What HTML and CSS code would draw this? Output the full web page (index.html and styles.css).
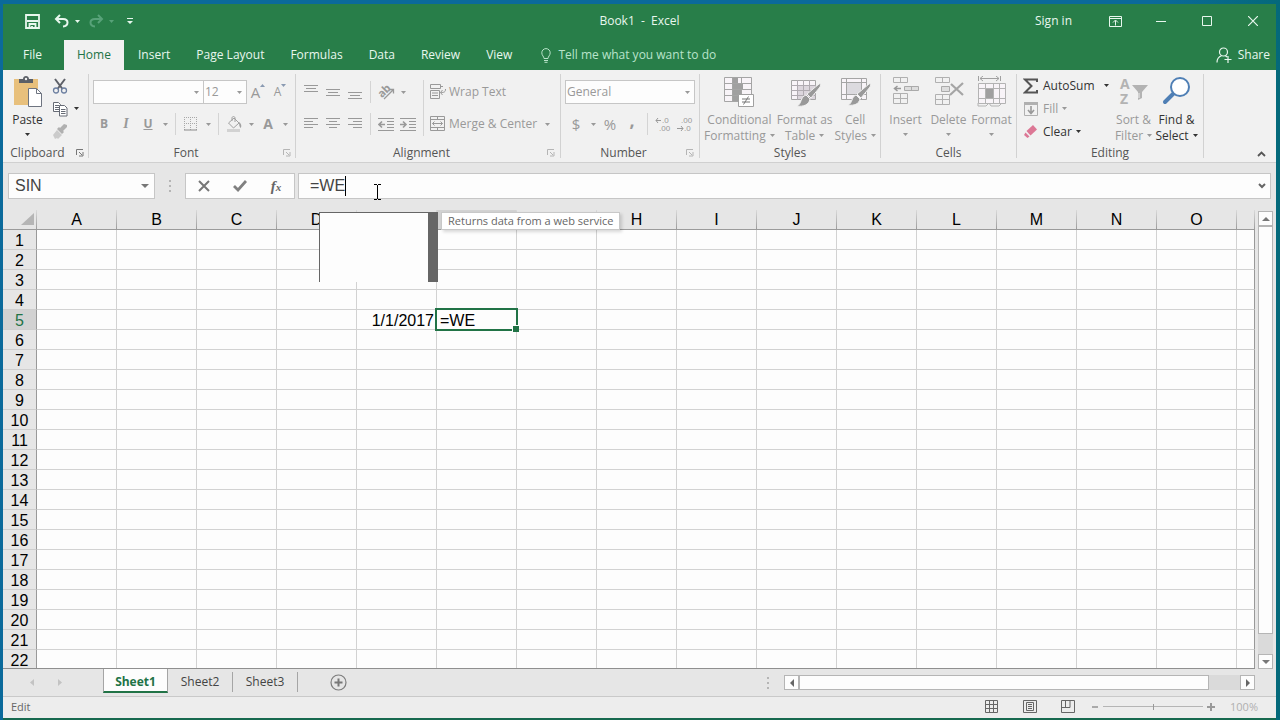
FILE: index.html
```html
<!DOCTYPE html>
<html lang="en">
<head>
  <meta charset="UTF-8">
  <meta name="viewport" content="width=device-width, initial-scale=1.0">
  <title>Book1 - Excel</title>
  <link rel="stylesheet" href="styles.css">
</head>
<body>
  <div class="window">
    <header class="titlebar">
      <div class="quick">
        <button class="quick-btn save" aria-label="Save"><svg width="15" height="15" viewBox="0 0 15 15"><path d="M1 1h13v13H1zM2 7h11M4.500 14v-4h6v4M7 14v-2" fill="none" stroke="currentColor" stroke-width="1.800"/></svg></button>
        <button class="quick-btn" aria-label="Undo"><svg width="16" height="14" viewBox="0 0 16 14"><path d="M6 1L2 5l4 4M2 5h7c6 0 6 7 0 7.500" fill="none" stroke="currentColor" stroke-width="2"/></svg></button>
        <button class="quick-drop" aria-label="Undo list"><svg class="caret" viewBox="0 0 5 3"><path d="M0 0h5L2.500 3z"/></svg></button>
        <button class="quick-btn off" aria-label="Redo"><svg width="16" height="14" viewBox="0 0 16 14"><path d="M10 1l4 4-4 4M14 5H7C1 5 1 12 7 12.500" fill="none" stroke="currentColor" stroke-width="2"/></svg></button>
        <button class="quick-drop off" aria-label="Redo list"><svg class="caret" viewBox="0 0 5 3"><path d="M0 0h5L2.500 3z"/></svg></button>
        <button class="quick-btn" aria-label="Customize toolbar"><svg width="6" height="7" viewBox="0 0 6 7"><path d="M0 0h6v1H0zM0 3h6L3 6z" fill="currentColor"/></svg></button>
      </div>
      <h1 class="doc-name">Book1 &nbsp;-&nbsp; Excel</h1>
      <div class="window-tools">
        <button class="sign-in">Sign in</button>
        <button class="win-btn" aria-label="Ribbon display options"><svg width="13" height="11" viewBox="0 0 13 11"><path d="M.5.5h12v10H.5zM.5 2.500h12M6.500 9.500V4.500M4 6.500l2.500-2.500L9 6.500" fill="none" stroke="currentColor"/></svg></button>
        <button class="win-btn" aria-label="Minimize"><svg width="10" height="10" viewBox="0 0 10 10"><path d="M0 5.500h10" stroke="currentColor"/></svg></button>
        <button class="win-btn" aria-label="Maximize"><svg width="10" height="10" viewBox="0 0 10 10"><path d="M.5.5h9v9h-9z" fill="none" stroke="currentColor"/></svg></button>
        <button class="win-btn" aria-label="Close"><svg width="10" height="10" viewBox="0 0 10 10"><path d="M0 0l10 10M10 0L0 10" stroke="currentColor" stroke-width="1.200"/></svg></button>
      </div>
    </header>

    <nav class="tabs">
      <a class="tab file" href="#">File</a>
      <a class="tab active" href="#">Home</a>
      <a class="tab" href="#">Insert</a>
      <a class="tab" href="#">Page Layout</a>
      <a class="tab" href="#">Formulas</a>
      <a class="tab" href="#">Data</a>
      <a class="tab" href="#">Review</a>
      <a class="tab" href="#">View</a>
      <a class="tell-me" href="#"><svg width="10" height="15" viewBox="0 0 10 15"><path d="M3 10.500C3 8.500.8 7.500.8 4.800a4.200 4.200 0 0 1 8.400 0C9.200 7.500 7 8.500 7 10.500zM3 12.500h4M3.500 14.300h3" fill="none" stroke="currentColor"/></svg>Tell me what you want to do</a>
      <a class="share" href="#"><svg width="16" height="16" viewBox="0 0 16 16"><circle cx="7.500" cy="5" r="4" fill="none" stroke="currentColor" stroke-width="1.200"/><path d="M1 15.500c0-4 2-6 4.500-6.800M9.500 8.700l1.500 1.300M12 9v7M8.500 12.500h7" fill="none" stroke="currentColor" stroke-width="1.200"/></svg>Share</a>
    </nav>

    <section class="ribbon">
      <div class="group clipboard">
        <div class="group-body">
          <button class="big on">
            <svg width="28" height="32" viewBox="0 0 28 32"><path d="M0 3h24v26H0z" fill="#e8c07c"/><path d="M5 7V3h4c0-4 6-4 6 0h4v4z" fill="#5b5f66"/><circle cx="12" cy="3" r="1.200" fill="#f1f1f1"/><path d="M14.500 12.500h8l5 5v13h-13z" fill="#fff" stroke="#6e7480"/><path d="M22.500 12.500v5h5" fill="none" stroke="#6e7480"/></svg>
            <span>Paste</span>
            <svg class="caret" viewBox="0 0 5 3"><path d="M0 0h5L2.500 3z"/></svg>
          </button>
          <div class="stack">
            <button class="line-btn on" aria-label="Cut"><svg width="16" height="16" viewBox="0 0 16 16"><path d="M3 1l7.500 10M13 1L5.500 11" stroke="#5d6068" stroke-width="2"/><circle cx="4" cy="12.500" r="2.500" fill="none" stroke="#6c7fa0" stroke-width="1.300"/><circle cx="12" cy="12.500" r="2.500" fill="none" stroke="#6c7fa0" stroke-width="1.300"/></svg></button>
            <button class="line-btn on" aria-label="Copy"><svg width="16" height="16" viewBox="0 0 16 16"><path d="M1.500 1.500h5l2 2v7h-7zM3 4.500h4M3 6.500h4M3 8.500h4" fill="#fff" stroke="#666b75"/><path d="M7.500 4.500h5l2.500 2.500v8H7.500zM9 8.500h4.500M9 10.500h4.500M9 12.500h4.500" fill="#fff" stroke="#666b75"/></svg><svg class="caret" viewBox="0 0 5 3"><path d="M0 0h5L2.500 3z"/></svg></button>
            <button class="line-btn" aria-label="Format painter"><svg width="16" height="16" viewBox="0 0 16 16"><path d="M15 1l-3-1-4 4-1-1-2 2 5 5 2-2-1-1 4-4z" fill="#b0b0b0"/><path d="M5 6l5 5-4 4-1-1-2 1-2-4z" fill="#cbcbcb"/></svg></button>
          </div>
        </div>
        <div class="group-foot"><span>Clipboard</span><button class="launcher on" aria-label="Clipboard settings"><svg width="8" height="8" viewBox="0 0 8 8"><path d="M.5 6V.5H7M3 3l3 3M7 3v4H3" fill="none" stroke="currentColor"/></svg></button></div>
      </div>

      <div class="group font">
        <div class="group-body rows">
          <div class="row">
            <div class="combo family"><select aria-label="Font"><option></option></select><svg class="caret" viewBox="0 0 5 3"><path d="M0 0h5L2.500 3z"/></svg></div>
            <div class="combo size"><select aria-label="Font size"><option>12</option></select><svg class="caret" viewBox="0 0 5 3"><path d="M0 0h5L2.500 3z"/></svg></div>
            <button class="tool grow" aria-label="Increase font size"><span class="glyph">A</span><svg width="5" height="3" viewBox="0 0 5 3"><path d="M0 3h5L2.500 0z" fill="#8a9ab2"/></svg></button>
            <button class="tool grow small" aria-label="Decrease font size"><span class="glyph">A</span><svg width="5" height="3" viewBox="0 0 5 3"><path d="M0 0h5L2.500 3z" fill="#8a9ab2"/></svg></button>
          </div>
          <div class="row">
            <button class="tool"><b>B</b></button>
            <button class="tool italic"><i>I</i></button>
            <button class="tool"><b><u>U</u></b></button>
            <button class="drop" aria-label="Underline styles"><svg class="caret" viewBox="0 0 5 3"><path d="M0 0h5L2.500 3z"/></svg></button>
            <span class="sep"></span>
            <button class="tool" aria-label="Borders"><svg width="14" height="14" viewBox="0 0 14 14"><path d="M.5 0v13M6.500 0v13M12.500 0v13M0 .5h13M0 6.500h13" fill="none" stroke="#a8a8a8" stroke-dasharray="1 1"/><path d="M0 13h13" stroke="#8b8b8b"/></svg></button>
            <button class="drop" aria-label="Border styles"><svg class="caret" viewBox="0 0 5 3"><path d="M0 0h5L2.500 3z"/></svg></button>
            <span class="sep"></span>
            <button class="tool" aria-label="Fill color"><svg width="16" height="16" viewBox="0 0 16 16"><path d="M2.500 7L8 2l5 5-5.500 5zM6 5V2c0-2 3-2 3 0v4" fill="none" stroke="#a0a0a0"/><path d="M13 6c3 2 2.500 5 1.500 6-1-1-1.500-3-1.500-6z" fill="#a0a0a0"/><path d="M1 13h13v3H1z" fill="#d2d2d2"/></svg></button>
            <button class="drop" aria-label="Fill colors"><svg class="caret" viewBox="0 0 5 3"><path d="M0 0h5L2.500 3z"/></svg></button>
            <button class="tool letter" aria-label="Font color"><b>A</b></button>
            <button class="drop" aria-label="Font colors"><svg class="caret" viewBox="0 0 5 3"><path d="M0 0h5L2.500 3z"/></svg></button>
          </div>
        </div>
        <div class="group-foot"><span>Font</span><button class="launcher" aria-label="Font settings"><svg width="8" height="8" viewBox="0 0 8 8"><path d="M.5 6V.5H7M3 3l3 3M7 3v4H3" fill="none" stroke="currentColor"/></svg></button></div>
      </div>

      <div class="group alignment">
        <div class="group-body">
          <div class="rows">
            <div class="row">
              <button class="tool" aria-label="Top align"><svg width="14" height="14" viewBox="0 0 14 14"><path d="M0 .5h14M2 3.500h10M0 6.500h14" stroke="currentColor"/></svg></button>
              <button class="tool" aria-label="Middle align"><svg width="14" height="14" viewBox="0 0 14 14"><path d="M0 4.500h14M2 7.500h10M0 10.500h14" stroke="currentColor"/></svg></button>
              <button class="tool" aria-label="Bottom align"><svg width="14" height="14" viewBox="0 0 14 14"><path d="M0 7.500h14M2 10.500h10M0 13.500h14" stroke="currentColor"/></svg></button>
              <span class="sep"></span>
              <button class="tool" aria-label="Orientation"><svg class="free" width="17" height="16" viewBox="0 0 17 16"><text x="0" y="11" font-size="11" font-weight="bold" fill="currentColor" transform="rotate(-45 6 8)">ab</text><path d="M6 15l9-9M11.500 5.500H15.500V9.500" fill="none" stroke="currentColor" stroke-width="1.300"/></svg></button>
              <button class="drop" aria-label="Orientation list"><svg class="caret" viewBox="0 0 5 3"><path d="M0 0h5L2.500 3z"/></svg></button>
            </div>
            <div class="row">
              <button class="tool" aria-label="Align left"><svg width="14" height="12" viewBox="0 0 14 12"><path d="M0 .5h14M0 3.500h9M0 6.500h14M0 9.500h9" stroke="currentColor"/></svg></button>
              <button class="tool" aria-label="Center"><svg width="14" height="12" viewBox="0 0 14 12"><path d="M0 .5h14M3 3.500h8M0 6.500h14M3 9.500h8" stroke="currentColor"/></svg></button>
              <button class="tool" aria-label="Align right"><svg width="14" height="12" viewBox="0 0 14 12"><path d="M0 .5h14M5 3.500h9M0 6.500h14M5 9.500h9" stroke="currentColor"/></svg></button>
              <span class="sep"></span>
              <button class="tool" aria-label="Decrease indent"><svg width="16" height="13" viewBox="0 0 16 13"><path d="M0 .5h16M9 3.500h7M9 6.500h7M9 9.500h7M0 12.500h16" stroke="currentColor"/><path d="M7 6.500H1M4 3.500l-3 3 3 3" fill="none" stroke="currentColor" stroke-width="1.600"/></svg></button>
              <button class="tool" aria-label="Increase indent"><svg width="16" height="13" viewBox="0 0 16 13"><path d="M0 .5h16M9 3.500h7M9 6.500h7M9 9.500h7M0 12.500h16" stroke="currentColor"/><path d="M0 6.500h6M3 3.500l3 3-3 3" fill="none" stroke="currentColor" stroke-width="1.600"/></svg></button>
            </div>
          </div>
          <span class="sep tall"></span>
          <div class="rows">
            <div class="row">
              <button class="text-btn"><svg width="16" height="16" viewBox="0 0 16 16"><path d="M.5.5h10v4H.5zM10 2.500h3M.5 6.500h9v8h-9zM2 9h6M2 11.500h6M15.500 5c0 3-1 3.500-5 3.500M12.500 6l-2 2.500 2 2.500" fill="none" stroke="currentColor"/></svg>Wrap Text</button>
            </div>
            <div class="row">
              <button class="text-btn"><svg width="16" height="16" viewBox="0 0 16 16"><path d="M.5.5h14v14H.5zM.5 3.500h14M.5 11.500h14M7.500.5v3M7.500 11.500v3M2.500 7.500h10M4.500 5.500l-2 2 2 2M10.500 5.500l2 2-2 2" fill="none" stroke="currentColor"/></svg>Merge &amp; Center</button>
              <button class="drop" aria-label="Merge options"><svg class="caret" viewBox="0 0 5 3"><path d="M0 0h5L2.500 3z"/></svg></button>
            </div>
          </div>
        </div>
        <div class="group-foot"><span>Alignment</span><button class="launcher" aria-label="Alignment settings"><svg width="8" height="8" viewBox="0 0 8 8"><path d="M.5 6V.5H7M3 3l3 3M7 3v4H3" fill="none" stroke="currentColor"/></svg></button></div>
      </div>

      <div class="group number">
        <div class="group-body rows">
          <div class="row">
            <div class="combo format"><select aria-label="Number format"><option>General</option></select><svg class="caret" viewBox="0 0 5 3"><path d="M0 0h5L2.500 3z"/></svg></div>
          </div>
          <div class="row">
            <button class="tool sign">$</button>
            <button class="drop" aria-label="Currencies"><svg class="caret" viewBox="0 0 5 3"><path d="M0 0h5L2.500 3z"/></svg></button>
            <button class="tool sign">%</button>
            <button class="tool comma">,</button>
            <span class="sep"></span>
            <button class="tool" aria-label="Increase decimal"><svg class="decimals" width="16" height="18" viewBox="0 0 16 18"><path d="M6 5.500H1M3 3L1 5.500 3 8" fill="none" stroke="currentColor"/><text x="7" y="8">.0</text><text x="4" y="16">.00</text></svg></button>
            <button class="tool" aria-label="Decrease decimal"><svg class="decimals" width="16" height="18" viewBox="0 0 16 18"><text x="4" y="8">.00</text><path d="M0 13.500h6M4 11l2 2.500L4 16" fill="none" stroke="currentColor"/><text x="7" y="16">.0</text></svg></button>
          </div>
        </div>
        <div class="group-foot"><span>Number</span><button class="launcher" aria-label="Number settings"><svg width="8" height="8" viewBox="0 0 8 8"><path d="M.5 6V.5H7M3 3l3 3M7 3v4H3" fill="none" stroke="currentColor"/></svg></button></div>
      </div>

      <div class="group styles">
        <div class="group-body">
          <button class="big">
            <svg width="32" height="32" viewBox="0 0 32 32"><path d="M1.500 1.500h27v24h-27z" fill="#f8f4f8" stroke="#a5a5a5"/><path d="M1 7.500h28M1 13.500h28M1 19.500h28M9.500 1v24M18.500 1v24" stroke="#a5a5a5"/><path d="M10 2h5v5h-5zM10 8h10v5H10zM10 14h8v5h-8zM10 20h5v5h-5z" fill="#a0a0a0"/><path d="M15.500 18.500h15v12h-15z" fill="#fff" stroke="#a0a0a0"/><path d="M19 23h8M19 26h8M25.500 20.500l-5 8" stroke="#777"/></svg>
            <span>Conditional<br>Formatting<svg class="caret" viewBox="0 0 5 3"><path d="M0 0h5L2.500 3z"/></svg></span>
          </button>
          <button class="big">
            <svg width="32" height="32" viewBox="0 0 32 32"><path d="M2.500 4.500h24v19h-24z" fill="#f8f4f8" stroke="#a5a5a5"/><path d="M8 9h18v14H8z" fill="#dcd6dd"/><path d="M2 9.500h25M2 14.500h25M2 19.500h25M8.500 4v20M14.500 4v20M20.500 4v20" stroke="#b0abb1"/><path d="M30 8c2-1 2 1 1 3l-9 11-4-4z" fill="#999" stroke="#f1f1f1"/><path d="M17 19l4 4c-1 6-7 8-13 7 5-2 3-9 9-11z" fill="#999" stroke="#f1f1f1"/></svg>
            <span>Format as<br>Table<svg class="caret" viewBox="0 0 5 3"><path d="M0 0h5L2.500 3z"/></svg></span>
          </button>
          <button class="big">
            <svg width="32" height="32" viewBox="0 0 32 32"><path d="M2.500 2.500h25v21h-25z" fill="#f8f4f8" stroke="#a5a5a5"/><path d="M2 6.500h26M2 18.500h26M7.500 2v22M22.500 2v22" stroke="#a5a5a5"/><path d="M8 7h14v11H8z" fill="#dcdadf"/><path d="M30 8c2-1 2 1 1 3l-9 11-4-4z" fill="#999" stroke="#f1f1f1"/><path d="M17 19l4 4c-1 5-6 7-12 6 5-2 3-8 8-10z" fill="#999" stroke="#f1f1f1"/></svg>
            <span>Cell<br>Styles<svg class="caret" viewBox="0 0 5 3"><path d="M0 0h5L2.500 3z"/></svg></span>
          </button>
        </div>
        <div class="group-foot"><span>Styles</span></div>
      </div>

      <div class="group cells">
        <div class="group-body">
          <button class="big">
            <svg width="28" height="32" viewBox="0 0 28 32"><path d="M1.500 1.500h14v5h-14zM8.500 1.500v5M1.500 17.500h14v10h-14zM8.500 17.500v10M1.500 22.500h14" fill="none" stroke="#b0b0b0"/><path d="M12.500 10.500h14v4h-14zM19.500 10.500v4" fill="#ddd" stroke="#aaa"/><path d="M9 12.500H3M5.500 10l-3 2.500 3 2.500" fill="none" stroke="#999" stroke-width="1.500"/></svg>
            <span>Insert</span>
            <svg class="caret" viewBox="0 0 5 3"><path d="M0 0h5L2.500 3z"/></svg>
          </button>
          <button class="big">
            <svg width="30" height="32" viewBox="0 0 30 32"><path d="M1.500 1.500h14v5h-14zM8.500 1.500v5M1.500 18.500h14v10h-14zM8.500 18.500v10M1.500 23.500h14" fill="none" stroke="#b0b0b0"/><path d="M7.500 10.500h8v5h-8z" fill="#ddd" stroke="#aaa"/><path d="M17 8l12 11M29 7L16 19" stroke="#a5a5a5" stroke-width="2.200"/></svg>
            <span>Delete</span>
            <svg class="caret" viewBox="0 0 5 3"><path d="M0 0h5L2.500 3z"/></svg>
          </button>
          <button class="big">
            <svg width="30" height="32" viewBox="0 0 30 32"><path d="M1.500 0v5M23.500 0v5M3 2.500h19M6 0L3 2.500 6 5M19 0l3 2.500L19 5" fill="none" stroke="#a0a0a0"/><path d="M1.500 7.500h27v20h-27zM8.500 7.500v20M16.500 7.500v20M22.500 7.500v20M1.500 12.500h27M1.500 22.500h27" fill="#f8f4f8" stroke="#b3b3b3"/><path d="M9 13h7v9H9z" fill="#a0a0a0"/><path d="M1 27v3h8l3-3 2 3h8l3-3" fill="none" stroke="#b3b3b3"/></svg>
            <span>Format</span>
            <svg class="caret" viewBox="0 0 5 3"><path d="M0 0h5L2.500 3z"/></svg>
          </button>
        </div>
        <div class="group-foot"><span>Cells</span></div>
      </div>

      <div class="group editing">
        <div class="group-body">
          <div class="stack">
            <button class="line-btn on sum"><svg width="16" height="16" viewBox="0 0 16 16"><path d="M14 4V1.500H2L8.500 8 2 14.500h12V12" fill="none" stroke="#555" stroke-width="2"/></svg>AutoSum<svg class="caret" viewBox="0 0 5 3"><path d="M0 0h5L2.500 3z"/></svg></button>
            <button class="line-btn"><svg width="16" height="16" viewBox="0 0 16 16"><path d="M1.500 1.500h13v13h-13z" fill="none" stroke="#b0b0b0"/><path d="M1 1h14v3H1z" fill="#b0b0b0"/><path d="M8 5v7M5 9l3 3.500L11 9" fill="none" stroke="#999" stroke-width="1.600"/></svg>Fill<svg class="caret" viewBox="0 0 5 3"><path d="M0 0h5L2.500 3z"/></svg></button>
            <button class="line-btn on"><svg width="16" height="16" viewBox="0 0 16 16"><path d="M10 1l4 4.500-6.500 6L3.500 7z" fill="#dc7795"/><path d="M2.500 8.500L6.500 12.500 4.500 14 1 11z" fill="#dc7795"/></svg>Clear<svg class="caret" viewBox="0 0 5 3"><path d="M0 0h5L2.500 3z"/></svg></button>
          </div>
          <button class="big">
            <svg width="30" height="32" viewBox="0 0 30 32"><text class="az" x="1" y="13">A</text><text class="az" x="1" y="28">Z</text><path d="M13 9h16l-6 7v6l-4 2v-8z" fill="#b3b3b3"/><path d="M20 17v5" stroke="#eee"/></svg>
            <span>Sort &amp;<br>Filter<svg class="caret" viewBox="0 0 5 3"><path d="M0 0h5L2.500 3z"/></svg></span>
          </button>
          <button class="big on">
            <svg width="30" height="32" viewBox="0 0 30 32"><path d="M12 17L3 26" stroke="#4f7fb5" stroke-width="4" stroke-linecap="round"/><circle cx="18" cy="11" r="9" fill="#fff" stroke="#4f7fb5" stroke-width="2"/></svg>
            <span>Find &amp;<br>Select<svg class="caret" viewBox="0 0 5 3"><path d="M0 0h5L2.500 3z"/></svg></span>
          </button>
        </div>
        <div class="group-foot"><span>Editing</span></div>
      </div>

      <button class="collapse" aria-label="Collapse the ribbon"><svg width="9" height="6" viewBox="0 0 9 6"><path d="M1 5l3.500-3.500L8 5" fill="none" stroke="currentColor" stroke-width="1.800"/></svg></button>
    </section>

    <div class="formula-bar">
      <div class="name-box">
        <input value="SIN" aria-label="Name box">
        <button aria-label="Names"><svg width="8" height="4" viewBox="0 0 8 4"><path d="M0 0h8L4 4z" fill="#777"/></svg></button>
      </div>
      <svg class="dots" width="2" height="12" viewBox="0 0 2 12"><path d="M0 0h2v2H0zM0 5h2v2H0zM0 10h2v2H0z" fill="#b5b5b5"/></svg>
      <div class="entry">
        <button aria-label="Cancel"><svg width="12" height="12" viewBox="0 0 12 12"><path d="M1 1l10 10M11 1L1 11" stroke="#777" stroke-width="2"/></svg></button>
        <button aria-label="Enter"><svg width="14" height="12" viewBox="0 0 14 12"><path d="M1 6l4 4 8-9" fill="none" stroke="#808080" stroke-width="2.800"/></svg></button>
        <button class="fx" aria-label="Insert function"><i>f<small>x</small></i></button>
      </div>
      <div class="formula">
        <input value="=WE" aria-label="Formula">
        <span class="text-cursor"></span>
        <svg class="pointer" width="9" height="16" viewBox="0 0 9 16"><path d="M1 .5h3M5 .5h3M4.500 1v14M1 15.500h3M5 15.500h3" stroke="#000"/></svg>
        <button aria-label="Expand formula bar"><svg width="8" height="6" viewBox="0 0 8 6"><path d="M1 1l3 3 3-3" fill="none" stroke="#666" stroke-width="2"/></svg></button>
      </div>
    </div>

    <main class="workspace">
      <div class="sheet">
        <table class="grid">
          <thead><tr id="columns"><th class="corner"><svg width="13" height="12" viewBox="0 0 13 12"><path d="M13 0v12H0z" fill="#b5b5b5"/></svg></th></tr></thead>
          <tbody id="cells"></tbody>
        </table>
        <div class="hint">
          <div class="hint-list"></div>
          <div class="hint-text">Returns data from a web service</div>
        </div>
      </div>
      <div class="vscroll">
        <button aria-label="Scroll up"><svg width="8" height="4" viewBox="0 0 8 4"><path d="M0 4h8L4 0z" fill="#777"/></svg></button>
        <div class="vthumb"></div>
        <button aria-label="Scroll down"><svg width="8" height="4" viewBox="0 0 8 4"><path d="M0 0h8L4 4z" fill="#777"/></svg></button>
      </div>
    </main>

    <div class="sheet-bar">
      <div class="sheet-nav">
        <button aria-label="Previous sheet"><svg width="4" height="7" viewBox="0 0 4 7"><path d="M4 0v7L0 3.500z" fill="#c3c3c3"/></svg></button>
        <button aria-label="Next sheet"><svg width="4" height="7" viewBox="0 0 4 7"><path d="M0 0v7l4-3.500z" fill="#c3c3c3"/></svg></button>
      </div>
      <a class="sheet-tab current" href="#">Sheet1</a>
      <a class="sheet-tab" href="#">Sheet2</a>
      <a class="sheet-tab" href="#">Sheet3</a>
      <button class="add-sheet" aria-label="New sheet"><svg width="17" height="17" viewBox="0 0 17 17"><circle cx="8.500" cy="8.500" r="7.500" fill="none" stroke="#7d7d7d" stroke-width="1.200"/><path d="M8.500 4.500v8M4.500 8.500h8" stroke="#777" stroke-width="2"/></svg></button>
      <svg class="dots" width="2" height="12" viewBox="0 0 2 12"><path d="M0 0h2v2H0zM0 5h2v2H0zM0 10h2v2H0z" fill="#b5b5b5"/></svg>
      <div class="hscroll">
        <button aria-label="Scroll left"><svg width="4" height="8" viewBox="0 0 4 8"><path d="M4 0v8L0 4z" fill="#666"/></svg></button>
        <div class="hthumb"></div>
        <button aria-label="Scroll right"><svg width="4" height="8" viewBox="0 0 4 8"><path d="M0 0v8l4-4z" fill="#666"/></svg></button>
      </div>
    </div>

    <footer class="status">
      <span class="mode">Edit</span>
      <div class="views">
        <button aria-label="Normal view"><svg width="14" height="14" viewBox="0 0 14 14"><path d="M.5.5h12v12H.5zM4.500.5v12M8.500.5v12M.5 4.500h12M.5 8.500h12" fill="none" stroke="currentColor"/></svg></button>
        <button aria-label="Page layout view"><svg width="14" height="14" viewBox="0 0 14 14"><path d="M.5.5h13v12H.5zM3.500 2.500h7v8h-7zM5 4.500h4M5 6.500h4M5 8.500h4" fill="none" stroke="currentColor"/></svg></button>
        <button aria-label="Page break view"><svg width="14" height="14" viewBox="0 0 14 14"><path d="M.5.5h13v12H.5zM4.500.5v7M9 .5v7M.5 7.500h8.500" fill="none" stroke="currentColor"/></svg></button>
      </div>
      <div class="zoom">
        <button aria-label="Zoom out"><svg width="8" height="8" viewBox="0 0 8 8"><path d="M1 4h6" stroke="#aaa" stroke-width="2"/></svg></button>
        <input type="range" min="0" max="200" value="100" aria-label="Zoom">
        <button aria-label="Zoom in"><svg width="8" height="8" viewBox="0 0 8 8"><path d="M0 4h8M4 0v8" stroke="#999" stroke-width="2"/></svg></button>
        <span class="percent">100%</span>
      </div>
    </footer>
  </div>
  <script src="script.js"></script>
</body>
</html>
```
FILE: styles.css
```css
* {
  margin: 0;
  padding: 0;
  box-sizing: border-box;
}

body {
  height: 100vh;
  padding: 4px 4px 2px 3px;
  background: linear-gradient(90deg, #0b6a9b, #0b6a9b 90%, #04697a);
  font-family: "Open Sans", "Noto Sans", sans-serif;
  font-size: 12px;
  line-height: 16px;
  color: #444;
  overflow: hidden;
}

button {
  border: none;
  background: none;
  font: inherit;
  color: inherit;
  display: flex;
  align-items: center;
  justify-content: center;
}

input, select {
  font: inherit;
  color: inherit;
  border: none;
  outline: none;
  background: none;
}

a {
  color: inherit;
  text-decoration: none;
}

svg {
  flex: none;
}

.caret {
  width: 5px;
  height: 3px;
  fill: currentColor;
}

.window {
  height: 100%;
  display: flex;
  flex-direction: column;
  background: #e6e6e6;
  box-shadow: 0 2px 0 #17694f;
}

/* title bar */
.titlebar {
  display: grid;
  grid-template-columns: 1fr auto 1fr;
  align-items: center;
  height: 36px;
  padding-bottom: 2px;
  background: #287e49;
  color: #e8f7ee;
}

.quick {
  display: flex;
  align-items: center;
  padding-left: 18px;
}

.quick-btn {
  width: 22px;
  height: 24px;
}

.quick-btn.save {
  margin-right: 8px;
}

.quick-drop {
  width: 8px;
  height: 24px;
}

.quick-drop + .quick-btn {
  margin-left: 4px;
}

.off {
  color: #58a279;
}

.doc-name {
  font-size: 12px;
  font-weight: 400;
}

.window-tools {
  display: flex;
  justify-content: flex-end;
}

.sign-in {
  margin-right: 20px;
}

.win-btn {
  width: 46px;
  height: 32px;
}

/* ribbon tabs */
.tabs {
  display: flex;
  height: 30px;
  background: #287e49;
  color: #e8f7ee;
}

.tab {
  padding: 7px 13px;
}

.tab.file {
  width: 61px;
  padding: 7px 20px;
}

.tab.active {
  width: 60px;
  margin-right: 1px;
  background: #f1f1f1;
  color: #217346;
}

.tell-me {
  display: flex;
  align-items: center;
  gap: 7px;
  margin-left: 16px;
  color: #b9e4cb;
}

.share {
  display: flex;
  align-items: center;
  gap: 6px;
  margin-left: auto;
  padding-right: 6px;
}

/* ribbon */
.ribbon {
  display: flex;
  height: 93px;
  background: #f1f1f1;
  border-bottom: 1px solid #d0d0d0;
  color: #999;
}

.group {
  display: flex;
  flex-direction: column;
  justify-content: space-between;
  margin: 4px 0;
  border-right: 1px solid #d2d2d2;
}

.group-body {
  display: flex;
}

.rows {
  display: flex;
  flex-direction: column;
  gap: 8px;
  padding-top: 6px;
}

.rows .rows {
  padding-top: 0;
}

.row {
  display: flex;
  align-items: center;
  height: 24px;
}

.group-foot {
  display: flex;
  align-items: center;
  height: 10px;
  color: #555;
}

.group-foot span {
  flex: 1;
  text-align: center;
}

.launcher {
  width: 16px;
  color: #b5b5b5;
}

.on {
  color: #333;
}

.launcher.on {
  color: #777;
}

.clipboard {
  width: 86px;
}

.font {
  width: 207px;
  padding-left: 4px;
}

.alignment {
  width: 265px;
  padding-left: 4px;
}

.number {
  width: 139px;
  padding-left: 4px;
}

.alignment .group-foot,
.number .group-foot {
  padding-right: 1px;
}

.styles {
  width: 181px;
}

.cells {
  width: 136px;
}

.editing {
  width: 187px;
}

.tool {
  width: 22px;
  height: 22px;
}

.drop {
  width: 12px;
  height: 22px;
}

.sep {
  width: 1px;
  height: 22px;
  margin: 0 4px;
  background: #d4d4d4;
}

.sep.tall {
  height: 56px;
  margin-top: 6px;
}

.italic {
  font-family: "Liberation Serif", serif;
  font-size: 14px;
  font-weight: bold;
}

.letter {
  font-size: 14px;
}

.grow {
  align-items: flex-start;
}

.glyph {
  font-size: 15px;
  line-height: 22px;
}

.small .glyph {
  font-size: 12px;
}

.grow svg {
  margin-top: 3px;
}

.sign {
  font-size: 15px;
}

.comma {
  font-size: 18px;
  font-weight: bold;
  padding-bottom: 8px;
}

.decimals, .free {
  overflow: visible;
}

.decimals {
  font-family: "Liberation Sans", Arial, sans-serif;
  font-size: 8px;
  fill: currentColor;
}

.combo {
  position: relative;
  height: 24px;
  border: 1px solid #c6c6c6;
  background: #fdfdfd;
}

.combo select {
  width: 100%;
  height: 100%;
  padding-left: 1px;
  appearance: none;
}

.combo .caret {
  position: absolute;
  right: 4px;
  top: 10px;
}

.family {
  width: 111px;
}

.size {
  width: 43px;
  border-left: none;
}

.format {
  width: 130px;
}

.text-btn {
  gap: 3px;
  padding-left: 2px;
}

.text-btn + .drop {
  margin-left: 4px;
}

.big {
  flex-direction: column;
  justify-content: flex-start;
  padding-top: 2px;
}

.big span {
  margin-top: 4px;
}

.big > .caret {
  margin-top: 5px;
}

.big span .caret {
  margin: 0 0 3px 4px;
}

.clipboard .big {
  width: 49px;
}

.clipboard .line-btn {
  gap: 6px;
}

.styles .group-body {
  justify-content: center;
  gap: 2px;
}

.styles .big {
  flex: none;
}

.cells .group-body {
  justify-content: center;
}

.cells .big {
  width: 43px;
}

.stack {
  display: flex;
  flex-direction: column;
}

.line-btn {
  height: 23px;
  gap: 4px;
  justify-content: flex-start;
}

.editing .stack {
  width: 95px;
  padding-left: 6px;
}

.sum .caret {
  margin-left: 5px;
}

.editing .big {
  width: 43px;
}

.az {
  font-size: 14px;
  font-weight: bold;
  fill: #b3b3b3;
}

.collapse {
  align-self: flex-end;
  width: 20px;
  height: 16px;
  margin: 0 5px 0 auto;
  color: #555;
}

/* formula bar */
.formula-bar {
  display: flex;
  align-items: center;
  padding: 10px 5px 11px;
  font-family: "Liberation Sans", Arial, sans-serif;
  font-size: 16px;
}

.name-box, .entry, .formula {
  display: flex;
  height: 26px;
  border: 1px solid #c6c6c6;
  background: #fdfdfd;
}

.name-box {
  width: 147px;
}

.name-box input {
  width: 100%;
  padding-left: 6px;
}

.name-box button {
  width: 22px;
}

.formula-bar .dots {
  margin: 0 14px;
}

.entry {
  width: 110px;
  margin-right: 3px;
}

.entry button {
  flex: 1;
}

.fx {
  font-family: "Liberation Serif", serif;
  font-size: 15px;
  font-weight: bold;
  color: #666;
}

.fx small {
  font-size: 11px;
}

.formula {
  position: relative;
  flex: 1;
}

.formula input {
  flex: 1;
  padding-left: 11px;
}

.formula button {
  width: 16px;
}

.text-cursor {
  position: absolute;
  left: 46px;
  top: 2px;
  width: 1px;
  height: 20px;
  background: #000;
}

.pointer {
  position: absolute;
  left: 74px;
  top: 10px;
}

/* sheet */
.workspace {
  flex: 1;
  display: flex;
  min-height: 0;
}

.sheet {
  position: relative;
  flex: 1;
  min-width: 0;
  overflow: hidden;
  border-bottom: 1px solid #8f8f8f;
}

.grid {
  width: 100%;
  table-layout: fixed;
  border-collapse: separate;
  border-spacing: 0;
  font-family: "Liberation Sans", Arial, sans-serif;
  font-size: 16px;
  line-height: 19px;
  color: #000;
  background: #fdfdfd;
}

.grid th, .grid td {
  height: 20px;
  white-space: nowrap;
  overflow: hidden;
}

.grid th {
  font-weight: 400;
  text-align: center;
  background: #e6e6e6;
}

.grid thead th {
  width: 80px;
  border-bottom: 1px solid #999;
  border-right: 1px solid;
  border-image: linear-gradient(#ddd, #999) 1;
}

.grid thead th.corner {
  width: 34px;
  text-align: right;
}

.grid thead th:last-child {
  width: auto;
}

.corner svg {
  margin-right: 2px;
}

.grid tbody th, .grid tbody td {
  padding-top: 2px;
  line-height: 17px;
}

.grid tbody th {
  border-right: 1px solid #999;
  border-bottom: 1px solid #cfcfcf;
}

.grid td {
  border-right: 1px solid #d2d2d2;
  border-bottom: 1px solid #d2d2d2;
}

.grid td:last-child {
  border-right-color: #999;
}

.grid thead th.picked, .grid tbody th.picked {
  background: #d2d2d2;
  color: #217346;
}

.grid td.number-cell {
  text-align: right;
  padding-right: 2px;
}

.grid td.edit-cell {
  position: relative;
  overflow: visible;
  padding-left: 3px;
}

.edit-cell::before {
  content: "";
  position: absolute;
  inset: -2px;
  border: 2px solid #217346;
}

.edit-cell::after {
  content: "";
  position: absolute;
  right: -3px;
  bottom: -3px;
  width: 6px;
  height: 6px;
  background: #217346;
  border: 1px solid #fff;
  border-width: 1px 0 0 1px;
}

.hint {
  position: absolute;
  left: 316px;
  top: 2px;
  display: flex;
  align-items: flex-start;
  gap: 3px;
}

.hint-list {
  width: 119px;
  height: 70px;
  background: #fdfdfd;
  border: 1px solid #666;
  border-width: 1px 10px 0 1px;
}

.hint-text {
  padding: 0 6px;
  border: 1px solid #c8c8c8;
  background: #fff;
  font-size: 11px;
  color: #666;
  box-shadow: 2px 2px 3px rgba(0, 0, 0, 0.15);
}

/* scroll bars */
.vscroll {
  display: flex;
  flex-direction: column;
  width: 15px;
  margin: 1px 3px 0 3px;
  background: #dadada;
}

.vscroll button, .hscroll button {
  flex: none;
  width: 15px;
  height: 15px;
  border: 1px solid #b5b5b5;
  background: #fdfdfd;
}

.vthumb {
  height: 89%;
  margin-bottom: auto;
  border: 1px solid #b5b5b5;
  background: #fdfdfd;
}

.sheet-bar {
  display: flex;
  align-items: center;
  height: 28px;
  padding-right: 21px;
  border-bottom: 1px solid #c9c9c9;
}

.sheet-nav {
  display: flex;
  width: 100px;
  padding-left: 15px;
}

.sheet-nav button {
  width: 28px;
  height: 20px;
}

.sheet-tab {
  align-self: flex-start;
  width: 65px;
  height: 24px;
  line-height: 24px;
  text-align: center;
}

.sheet-tab:not(.current) {
  height: 20px;
  margin-top: 3px;
  line-height: 20px;
  border-right: 1px solid #a5a5a5;
}

.sheet-tab.current {
  margin-top: -1px;
  height: 25px;
  line-height: 27px;
  background: #fdfdfd;
  border-bottom: 2px solid #217346;
  border-left: 1px solid #a5a5a5;
  border-right: 1px solid #a5a5a5;
  color: #217346;
  font-weight: bold;
}

.add-sheet {
  margin-left: 32px;
}

.sheet-bar .dots {
  margin-left: auto;
  margin-right: 15px;
}

.hscroll {
  display: flex;
  width: 471px;
  background: #dadada;
}

.hthumb {
  width: 87%;
  margin-right: auto;
  border: 1px solid #b5b5b5;
  background: #fdfdfd;
}

/* status bar */
.status {
  display: flex;
  align-items: center;
  height: 21px;
  padding: 0 18px 2px 8px;
  background: #ededed;
  color: #666;
}

.mode {
  font-size: 11px;
}

.views {
  display: flex;
  gap: 24px;
  margin-left: auto;
}

.zoom {
  display: flex;
  align-items: center;
  margin-left: 16px;
}

.zoom input {
  width: 100px;
  height: 12px;
  margin: 0 4px;
  appearance: none;
  background: linear-gradient(#b5b5b5, #b5b5b5) center / 100% 1px no-repeat;
}

.zoom input::-webkit-slider-thumb {
  appearance: none;
  width: 1px;
  height: 6px;
  background: #999;
}

.percent {
  margin-left: 15px;
  font-size: 11px;
  color: #b0b0b0;
}
```
FILE: script.js
```javascript
const letters = 'ABCDEFGHIJKLMNO'.split('');
const columns = document.getElementById('columns');
const cells = document.getElementById('cells');

letters.concat('').forEach(letter => {
  const th = document.createElement('th');
  th.textContent = letter;
  if (letter === 'F') th.className = 'picked';
  columns.appendChild(th);
});

for (let r = 1; r <= 22; r++) {
  const row = document.createElement('tr');
  const head = document.createElement('th');
  head.textContent = r;
  if (r === 5) head.className = 'picked';
  row.appendChild(head);

  letters.concat('').forEach(letter => {
    const td = document.createElement('td');
    if (r === 5 && letter === 'E') {
      td.textContent = '1/1/2017';
      td.className = 'number-cell';
    }
    if (r === 5 && letter === 'F') {
      td.textContent = '=WE';
      td.className = 'edit-cell';
    }
    row.appendChild(td);
  });
  cells.appendChild(row);
}
```
